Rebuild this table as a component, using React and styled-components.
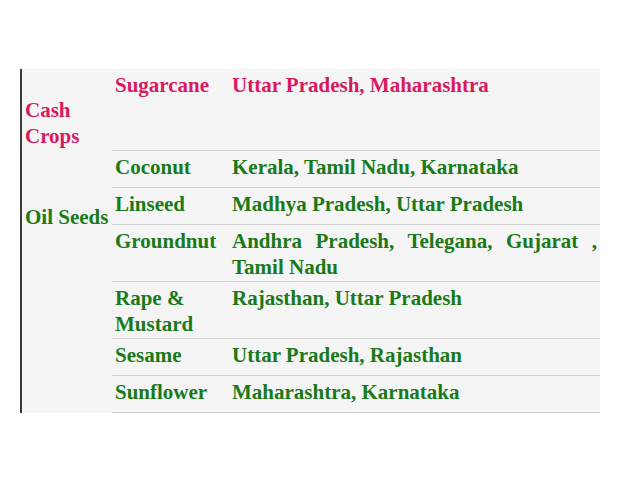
import React from 'react'
import styled, { createGlobalStyle } from 'styled-components'

const groups = [
  {
    label: 'Cash Crops',
    color: '#d81a60',
    labelTop: 29,
    rows: [{ crop: 'Sugarcane', states: 'Uttar Pradesh, Maharashtra', h: 82 }],
  },
  {
    label: 'Oil Seeds',
    color: '#1a7a1a',
    labelTop: 54,
    rows: [
      { crop: 'Coconut', states: 'Kerala, Tamil Nadu, Karnataka', h: 37 },
      { crop: 'Linseed', states: 'Madhya Pradesh, Uttar Pradesh', h: 37 },
      { crop: 'Groundnut', states: 'Andhra Pradesh, Telegana, Gujarat , Tamil Nadu', h: 57 },
      { crop: 'Rape & Mustard', states: 'Rajasthan, Uttar Pradesh', h: 57 },
      { crop: 'Sesame', states: 'Uttar Pradesh, Rajasthan', h: 37 },
      { crop: 'Sunflower', states: 'Maharashtra, Karnataka', h: 37 },
    ],
  },
]

const App = () => {
  return (
    <>
      <Global />
      <Page>
        <Table>
          {groups.map((g) => (
            <Group key={g.label} $color={g.color}>
              <Label $top={g.labelTop}>{g.label}</Label>
              <Rows>
                {g.rows.map((r) => (
                  <Row key={r.crop} $h={r.h}>
                    <Crop>{r.crop}</Crop>
                    <States>{r.states}</States>
                  </Row>
                ))}
              </Rows>
            </Group>
          ))}
        </Table>
      </Page>
    </>
  )
}
export default App

const Global = createGlobalStyle`
  body {
    margin: 0;
    background: #fff;
  }
`

const Page = styled.div`
  width: 638px;
  height: 478px;
  padding: 69px 0 0 20px;
  box-sizing: border-box;
  font-family: 'Liberation Serif', 'Times New Roman', serif;
  font-weight: bold;
  font-size: 21px;
  line-height: 25.5px;
`

const Table = styled.div`
  width: 580px;
  box-sizing: border-box;
  display: flex;
  flex-direction: column;
  background: #f5f5f5;
  border-left: 2px solid #3a3a3a;
`

const Group = styled.div`
  display: flex;
  color: ${(p) => p.$color};
`

const Label = styled.div`
  width: 90px;
  flex-shrink: 0;
  box-sizing: border-box;
  padding: ${(p) => p.$top}px 0 0 3px;
`

const Rows = styled.div`
  flex: 1;
  display: flex;
  flex-direction: column;
`

const Row = styled.div`
  display: grid;
  grid-template-columns: 117px 1fr;
  height: ${(p) => p.$h}px;
  box-sizing: border-box;
  padding-top: 4px;
  border-bottom: 1px solid #d2d2d2;
`

const Crop = styled.div`
  padding-left: 3px;
  padding-right: 2px;
`

const States = styled.div`
  padding: 0 3px;
  text-align: justify;
`
